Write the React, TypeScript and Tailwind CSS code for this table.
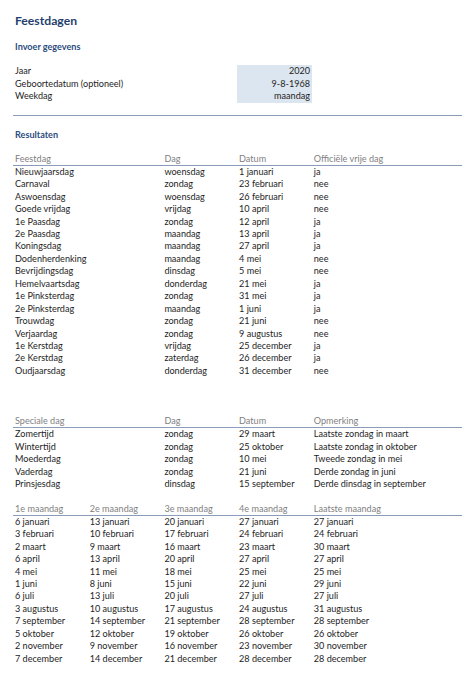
import React from "react";

const feestdagen: [string, string, string, string][] = [
  ["Nieuwjaarsdag", "woensdag", "1 januari", "ja"],
  ["Carnaval", "zondag", "23 februari", "nee"],
  ["Aswoensdag", "woensdag", "26 februari", "nee"],
  ["Goede vrijdag", "vrijdag", "10 april", "nee"],
  ["1e Paasdag", "zondag", "12 april", "ja"],
  ["2e Paasdag", "maandag", "13 april", "ja"],
  ["Koningsdag", "maandag", "27 april", "ja"],
  ["Dodenherdenking", "maandag", "4 mei", "nee"],
  ["Bevrijdingsdag", "dinsdag", "5 mei", "nee"],
  ["Hemelvaartsdag", "donderdag", "21 mei", "ja"],
  ["1e Pinksterdag", "zondag", "31 mei", "ja"],
  ["2e Pinksterdag", "maandag", "1 juni", "ja"],
  ["Trouwdag", "zondag", "21 juni", "nee"],
  ["Verjaardag", "zondag", "9 augustus", "nee"],
  ["1e Kerstdag", "vrijdag", "25 december", "ja"],
  ["2e Kerstdag", "zaterdag", "26 december", "ja"],
  ["Oudjaarsdag", "donderdag", "31 december", "nee"],
];

const speciaal: [string, string, string, string][] = [
  ["Zomertijd", "zondag", "29 maart", "Laatste zondag in maart"],
  ["Wintertijd", "zondag", "25 oktober", "Laatste zondag in oktober"],
  ["Moederdag", "zondag", "10 mei", "Tweede zondag in mei"],
  ["Vaderdag", "zondag", "21 juni", "Derde zondag in juni"],
  ["Prinsjesdag", "dinsdag", "15 september", "Derde dinsdag in september"],
];

const maandagen: [string, string, string, string, string][] = [
  ["6 januari", "13 januari", "20 januari", "27 januari", "27 januari"],
  ["3 februari", "10 februari", "17 februari", "24 februari", "24 februari"],
  ["2 maart", "9 maart", "16 maart", "23 maart", "30 maart"],
  ["6 april", "13 april", "20 april", "27 april", "27 april"],
  ["4 mei", "11 mei", "18 mei", "25 mei", "25 mei"],
  ["1 juni", "8 juni", "15 juni", "22 juni", "29 juni"],
  ["6 juli", "13 juli", "20 juli", "27 juli", "27 juli"],
  ["3 augustus", "10 augustus", "17 augustus", "24 augustus", "31 augustus"],
  ["7 september", "14 september", "21 september", "28 september", "28 september"],
  ["5 oktober", "12 oktober", "19 oktober", "26 oktober", "26 oktober"],
  ["2 november", "9 november", "16 november", "23 november", "30 november"],
  ["7 december", "14 december", "21 december", "28 december", "28 december"],
];

function Row({ cells, header }: { cells: string[]; header?: boolean }) {
  const spans4 = ["col-span-2", "", "", "col-span-2"];
  return (
    <div
      className={
        "w-[449px] grid grid-cols-[repeat(6,74.7px)] leading-[12.45px] whitespace-nowrap " +
        (header ? "text-[#7f7f7f] border-b border-[#8a9cb8] h-[12.9px]" : "text-[#1e1e1e] h-[12.45px]")
      }
    >
      {cells.map((c, i) => (
        <div key={i} className={"pl-[2px] " + (cells.length === 4 ? spans4[i] : i === 4 ? "col-span-2" : "")}>
          {c}
        </div>
      ))}
    </div>
  );
}

export default function App() {
  return (
    <div
      className="w-[474px] h-[676px] bg-white overflow-hidden pl-[13px] text-[9.1px]"
      style={{ fontFamily: "Lato, 'Liberation Sans', sans-serif" }}
    >
      <div className="pt-[13px] h-[29px] leading-[16px] text-[12.2px] font-bold text-[#1f3f6e] pl-[2px]">Feestdagen</div>
      <div className="mt-[12px] h-[12px] leading-[12px] font-bold text-[#2c4d7e] pl-[2px]">Invoer gegevens</div>
      <div className="mt-[12px] grid grid-cols-[224px_75px] text-[#1e1e1e]">
        <div className="pl-[2px] leading-[12.67px]">
          <div className="h-[12.67px]">Jaar</div>
          <div className="h-[12.67px]">Geboortedatum (optioneel)</div>
          <div className="h-[12.67px]">Weekdag</div>
        </div>
        <div className="bg-[#dce6f1] text-right pr-[2px] leading-[12.67px]">
          <div className="h-[12.67px]">2020</div>
          <div className="h-[12.67px]">9-8-1968</div>
          <div className="h-[12.67px]">maandag</div>
        </div>
      </div>
      <div className="mt-[12px] w-[449px] border-t border-[#8a9cb8]" />
      <div className="mt-[13px] h-[12px] leading-[12px] font-bold text-[#2c4d7e] pl-[2px]">Resultaten</div>
      <div className="mt-[12px]">
        <Row header cells={["Feestdag", "Dag", "Datum", "Officiële vrije dag"]} />
        {feestdagen.map((r, i) => (
          <Row key={i} cells={r} />
        ))}
      </div>
      <div className="mt-[38px]">
        <Row header cells={["Speciale dag", "Dag", "Datum", "Opmerking"]} />
        {speciaal.map((r, i) => (
          <Row key={i} cells={r} />
        ))}
      </div>
      <div className="mt-[12.5px]">
        <Row header cells={["1e maandag", "2e maandag", "3e maandag", "4e maandag", "Laatste maandag"]} />
        {maandagen.map((r, i) => (
          <Row key={i} cells={r} />
        ))}
      </div>
    </div>
  );
}
